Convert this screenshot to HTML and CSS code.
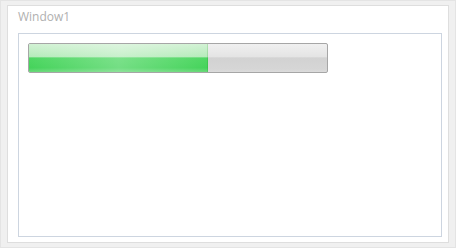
FILE: index.html
```html
<!DOCTYPE html>
<html>
<head>
  <meta charset="UTF-8">
  <title>Window1</title>
  <link rel="stylesheet" href="styles.css">
</head>
<body>
  <div class="frame">
    <div class="window">
      <div class="title">Window1</div>
      <div class="panel">
        <div class="progress">
          <div class="fill" style="width: 60%"></div>
        </div>
      </div>
    </div>
  </div>
</body>
</html>
```
FILE: styles.css
```css
html, body {
  margin: 0;
  padding: 0;
}
body {
  width: 456px;
  height: 248px;
  background: #f4f4f4;
  font-family: "Open Sans", "Liberation Sans", sans-serif;
}
.frame {
  box-sizing: border-box;
  width: 456px;
  height: 248px;
  padding: 4px 6px 4px 6px;
  border: 1px solid #e4e4e4;
  background: #f0f0f0;
}
.window {
  box-sizing: border-box;
  height: 100%;
  background: #fff;
  border: 1px solid #dedede;
  padding: 3px 6px 5px 10px;
  display: flex;
  flex-direction: column;
}
.title {
  font-size: 12px;
  line-height: 15px;
  height: 24px;
  color: #b0b0b0;
}
.panel {
  flex: 1;
  border: 1px solid #cdd5e0;
  padding: 9px;
}
.progress {
  position: relative;
  width: 298px;
  height: 28px;
  border: 1px solid #a6a6a6;
  border-radius: 2px;
  background: linear-gradient(to bottom, #f0f0f0 0%, #e4e4e4 45%, #d2d2d2 50%, #d6d6d6 90%, #dcdcdc 100%);
  overflow: hidden;
}
.fill {
  height: 100%;
  background:
    linear-gradient(to right, rgba(255,255,255,0) 0%, rgba(255,255,255,0.25) 50%, rgba(255,255,255,0) 100%),
    linear-gradient(to bottom, #d2f2d4 0%, #b6ebbb 45%, #4fd763 50%, #45d35b 85%, #6ad97a 100%);
  box-shadow: inset -1px 0 0 rgba(0,120,0,0.15);
}
```
